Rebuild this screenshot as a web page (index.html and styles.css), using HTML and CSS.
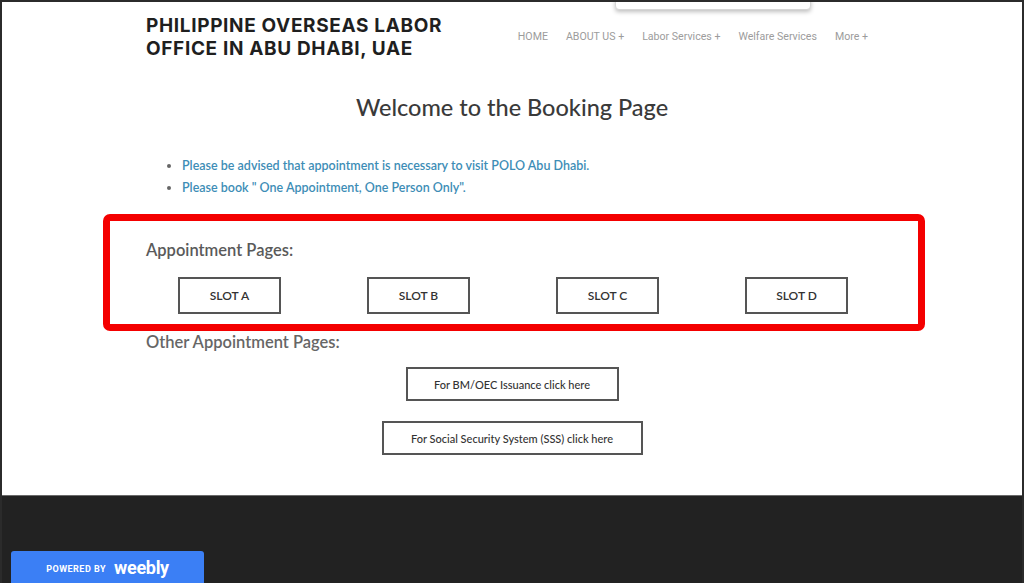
FILE: index.html
```html
<!DOCTYPE html>
<html lang="en">
<head>
<meta charset="utf-8">
<title>Booking Page</title>
<link rel="stylesheet" href="styles.css">
</head>
<body>
<div class="frame">
  <div class="dropdown-peek"></div>
  <header class="header">
    <div class="container header-inner">
      <div class="site-title">PHILIPPINE OVERSEAS LABOR<br>OFFICE IN ABU DHABI, UAE</div>
      <nav class="nav">
        <a class="nav-link">HOME</a>
        <a class="nav-link">ABOUT US +</a>
        <a class="nav-link">Labor Services +</a>
        <a class="nav-link">Welfare Services</a>
        <a class="nav-link">More +</a>
      </nav>
    </div>
  </header>
  <main class="main">
    <div class="container">
      <h1 class="page-title">Welcome to the Booking Page</h1>
      <ul class="notes">
        <li>Please be advised that appointment is necessary to visit POLO Abu Dhabi.</li>
        <li>Please book " One Appointment, One Person Only".</li>
      </ul>
      <h2 class="section-title">Appointment Pages:</h2>
      <div class="slots">
        <div class="slot-col"><a class="btn slot-btn">SLOT A</a></div>
        <div class="slot-col"><a class="btn slot-btn">SLOT B</a></div>
        <div class="slot-col"><a class="btn slot-btn">SLOT C</a></div>
        <div class="slot-col"><a class="btn slot-btn">SLOT D</a></div>
      </div>
      <h2 class="section-title other">Other Appointment Pages:</h2>
      <div class="other-links">
        <a class="btn wide-btn bm">For BM/OEC Issuance click here</a>
        <a class="btn wide-btn sss">For Social Security System (SSS) click here</a>
      </div>
    </div>
  </main>
  <footer class="footer"></footer>
  <div class="highlight"></div>
  <div class="weebly-badge"><span class="powered">POWERED BY</span><span class="weebly">weebly</span></div>
</div>
</body>
</html>
```
FILE: styles.css
```css
html, body {
  margin: 0;
  padding: 0;
  background: #fff;
}
.frame {
  position: relative;
  box-sizing: border-box;
  width: 1024px;
  height: 583px;
  border: 2px solid #2b2b2b;
  border-bottom: none;
  display: flex;
  flex-direction: column;
  overflow: hidden;
  font-family: "Lato", "Liberation Sans", sans-serif;
}
.container {
  width: 732px;
  margin: 0 auto;
}
.dropdown-peek {
  position: absolute;
  left: 613px;
  top: -4px;
  width: 194px;
  height: 10px;
  background: #fff;
  border: 1px solid #d6d6d6;
  border-radius: 0 0 4px 4px;
  box-shadow: 0 2px 4px rgba(0,0,0,0.25);
}
.header-inner {
  display: flex;
  align-items: center;
  justify-content: space-between;
  padding-top: 12px;
}
.site-title {
  font-family: "Inter", "Open Sans", sans-serif;
  font-weight: 700;
  font-size: 19px;
  line-height: 23px;
  color: #1f1f1f;
  letter-spacing: 0.65px;
}
.nav {
  display: flex;
  gap: 18px;
  margin-right: 10px;
  margin-bottom: 2px;
}
.nav-link {
  font-family: "Roboto", "Liberation Sans", sans-serif;
  font-size: 10.6px;
  color: #9c9c9c;
  letter-spacing: 0;
}
.page-title {
  margin: 32px 0 0;
  text-align: center;
  font-size: 23.5px;
  line-height: 30px;
  font-weight: 500;
  color: #3a3a3a;
}
.notes {
  margin: 33px 0 0;
  padding-left: 36px;
  list-style: disc;
  color: #3d8db6;
  font-size: 12.5px;
  line-height: 22px;
  font-weight: 600;
}
.notes li::marker {
  color: #666;
  font-size: 12px;
}
.section-title {
  margin: 39px 0 0;
  font-size: 16.5px;
  line-height: 24px;
  font-weight: 600;
  color: #5a5a5a;
}
.section-title.other {
  margin-top: 16px;
  color: #666;
}
.slots {
  display: grid;
  grid-template-columns: repeat(4, 189px);
  margin: 15px 0 0 -11px;
}
.slot-col {
  display: flex;
  justify-content: center;
}
.btn {
  box-sizing: border-box;
  display: flex;
  align-items: center;
  justify-content: center;
  border: 2px solid #555;
  color: #333;
  font-weight: 600;
  background: #fff;
}
.slot-btn {
  width: 103px;
  height: 37px;
  font-size: 12px;
}
.other-links {
  display: flex;
  flex-direction: column;
  align-items: center;
  gap: 20px;
  margin-top: 13px;
  padding-bottom: 40px;
}
.wide-btn {
  height: 34px;
  font-size: 11px;
  font-weight: 500;
}
.bm { width: 213px; }
.sss { width: 261px; }
.footer {
  flex: 1;
  background: #222;
  border-top: 1px solid #6a6a6a;
}
.highlight {
  position: absolute;
  left: 101px;
  top: 212px;
  width: 822px;
  height: 117px;
  box-sizing: border-box;
  border: 7px solid #f40000;
  border-radius: 7px;
}
.weebly-badge {
  position: absolute;
  left: 9px;
  top: 549px;
  width: 193px;
  height: 36px;
  background: #3b7ff5;
  border-radius: 3px 3px 0 0;
  display: flex;
  align-items: center;
  justify-content: center;
  gap: 8px;
  color: #fff;
}
.powered {
  font-family: "Roboto", sans-serif;
  font-size: 9px;
  font-weight: 700;
  letter-spacing: 0.5px;
}
.weebly {
  font-family: "Roboto", sans-serif;
  font-size: 18px;
  font-weight: 700;
  letter-spacing: -0.3px;
  line-height: 1;
  margin-top: -3px;
}
```
